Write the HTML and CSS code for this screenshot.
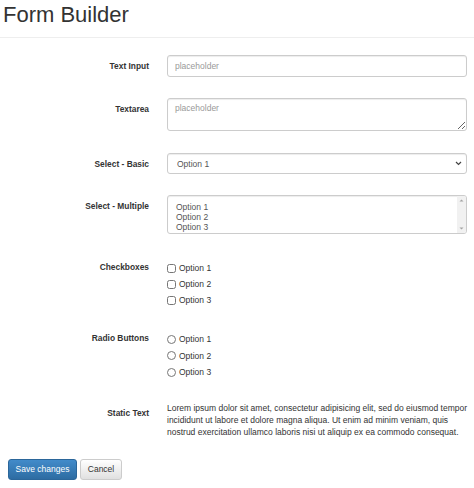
FILE: index.html
```html
<!DOCTYPE html>
<html lang="en">
<head>
  <meta charset="UTF-8" />
  <title>Form Builder</title>
  <link rel="stylesheet" href="styles.css">
</head>
<body>

<!-- Header -->
<div class="page-header">
  <h1>Form Builder</h1>
</div>

<!-- Form -->
<form class="builder">
  <div class="form-row">
    <label class="control-label" for="textinput">Text Input</label>
    <input type="text" id="textinput" class="control" placeholder="placeholder">
  </div>

  <div class="form-row row-area">
    <label class="control-label" for="textarea">Textarea</label>
    <textarea id="textarea" class="control area" placeholder="placeholder"></textarea>
  </div>

  <div class="form-row">
    <label class="control-label" for="selectbasic">Select - Basic</label>
    <div class="select-wrap">
      <select id="selectbasic" class="control select">
        <option>Option 1</option>
        <option>Option 2</option>
        <option>Option 3</option>
      </select>
      <svg class="chevron" width="7" height="5" viewBox="0 0 7 5">
        <path d="M1 1 L3.5 3.5 L6 1" fill="none" stroke="#444" stroke-width="1.2"/>
      </svg>
    </div>
  </div>

  <div class="form-row row-multi">
    <label class="control-label" for="selectmultiple">Select - Multiple</label>
    <div class="select-wrap">
      <select id="selectmultiple" class="control multi" multiple>
        <option>Option 1</option>
        <option>Option 2</option>
        <option>Option 3</option>
        <option>Option 4</option>
        <option>Option 5</option>
      </select>
      <div class="scrollbar">
        <svg width="9" height="9" viewBox="0 0 9 9"><path d="M2.5 5.5 L4.5 3.5 L6.5 5.5 Z" fill="#a3a3a3"/></svg>
        <svg width="9" height="9" viewBox="0 0 9 9"><path d="M2.5 3.5 L4.5 5.5 L6.5 3.5 Z" fill="#a3a3a3"/></svg>
      </div>
    </div>
  </div>

  <div class="form-row row-checks">
    <span class="control-label">Checkboxes</span>
    <div class="choices">
      <label class="choice"><input type="checkbox" name="checkboxes"> Option 1</label>
      <label class="choice"><input type="checkbox" name="checkboxes"> Option 2</label>
      <label class="choice"><input type="checkbox" name="checkboxes"> Option 3</label>
    </div>
  </div>

  <div class="form-row row-radios">
    <span class="control-label">Radio Buttons</span>
    <div class="choices radios">
      <label class="choice"><input type="radio" name="radios"> Option 1</label>
      <label class="choice"><input type="radio" name="radios"> Option 2</label>
      <label class="choice"><input type="radio" name="radios"> Option 3</label>
    </div>
  </div>

  <div class="form-row row-static">
    <span class="control-label">Static Text</span>
    <p class="static">Lorem ipsum dolor sit amet, consectetur adipisicing elit, sed do eiusmod tempor incididunt ut labore et dolore magna aliqua. Ut enim ad minim veniam, quis nostrud exercitation ullamco laboris nisi ut aliquip ex ea commodo consequat.</p>
  </div>

  <div class="actions">
    <button type="button" class="btn btn-primary">Save changes</button>
    <button type="button" class="btn btn-default">Cancel</button>
  </div>
</form>

</body>
</html>
```

FILE: styles.css
```css
html, body {
  margin: 0;
  padding: 0;
  background-color: white;
  color: #333;
  font-family: "Liberation Sans", Arial, sans-serif;
  font-size: 8.5px;
}
.page-header {
  padding: 2px 3px 9px;
  border-bottom: 1px solid #eee;
}
.page-header h1 {
  margin: 0;
  font-size: 22px;
  line-height: 26px;
  font-weight: normal;
}
.builder {
  padding-top: 17px;
}
.form-row {
  display: grid;
  grid-template-columns: 149px 300px;
  column-gap: 18px;
  align-items: start;
  margin-bottom: 21px;
}
.control-label {
  text-align: right;
  font-weight: bold;
  font-size: 8.4px;
  line-height: 12px;
  padding-top: 5px;
}
.control {
  box-sizing: border-box;
  width: 100%;
  height: 22px;
  margin: 0;
  padding: 0 7px;
  border: 1px solid #ccc;
  border-radius: 3px;
  box-shadow: inset 0 1px 1px rgba(0,0,0,.075);
  background-color: white;
  color: #555;
  font-family: "Liberation Sans", Arial, sans-serif;
  font-size: 8.5px;
}
.control::placeholder {
  color: #999;
}
.row-area { margin-bottom: 22px; }
.area {
  display: block;
  height: 33px;
  padding: 4px 7px;
  resize: vertical;
}
.select-wrap {
  position: relative;
}
.select {
  display: block;
  height: 21px;
  padding: 0 9px;
  appearance: none;
  -webkit-appearance: none;
}
.chevron {
  position: absolute;
  right: 5px;
  top: 8px;
}
.row-multi { margin-bottom: 22px; }
.multi {
  display: block;
  height: 39px;
  padding: 6px 7px 0;
  line-height: 10px;
  overflow: hidden;
  scrollbar-width: none;
}
.multi option {
  padding: 0 1px;
  line-height: 10px;
}
.scrollbar {
  position: absolute;
  top: 1px;
  right: 1px;
  bottom: 1px;
  width: 9px;
  background-color: #f1f1f1;
  border-radius: 0 2px 2px 0;
  display: flex;
  flex-direction: column;
  justify-content: space-between;
}
.choices {
  padding-top: 4px;
}
.choice {
  display: flex;
  align-items: center;
  height: 16px;
  font-size: 8.5px;
}
.choice input {
  width: 9px;
  height: 9px;
  margin: 0 3px 0 0;
}
.row-checks { margin-bottom: 19px; }
.row-radios { margin-bottom: 21px; }
.radios .choice { height: 16.5px; }
.static {
  margin: 0;
  line-height: 12px;
  font-size: 8.5px;
}
.actions {
  display: flex;
  gap: 3px;
  padding: 0 8px;
}
.btn {
  height: 21px;
  padding: 0;
  border-radius: 3px;
  white-space: nowrap;
  font-family: "Liberation Sans", Arial, sans-serif;
  font-size: 8.5px;
  cursor: pointer;
}
.btn-primary {
  width: 69px;
  color: white;
  border: 1px solid #2b669a;
  background-image: linear-gradient(to bottom, #428bca 0, #2d6ca2 100%);
}
.btn-default {
  width: 42px;
  color: #333;
  border: 1px solid #ccc;
  background-image: linear-gradient(to bottom, #fff 0, #e0e0e0 100%);
}
```
